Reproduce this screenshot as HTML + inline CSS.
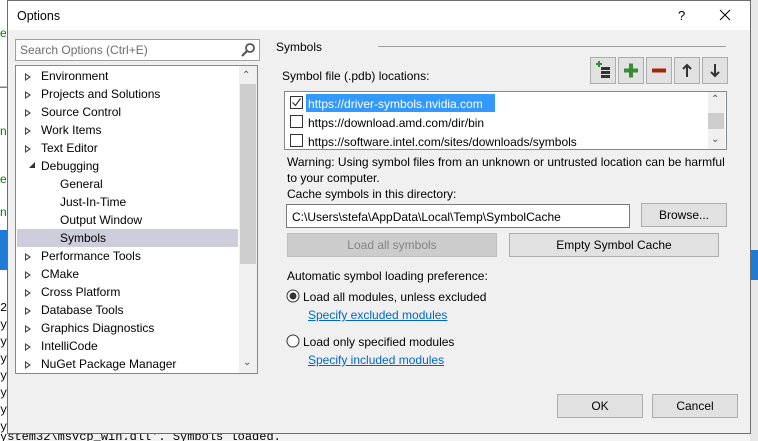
<!DOCTYPE html>
<html style="width:758px;height:441px;overflow:hidden"><head><style>
*{box-sizing:border-box;margin:0;padding:0}
body{width:758px;height:441px;overflow:hidden;background:#f3f3f3;font-family:"Liberation Sans",sans-serif;font-size:12px;color:#000;position:relative}
.a{position:absolute;white-space:nowrap}
.btn{position:absolute;background:#e1e1e1;border:1px solid #adadad;text-align:center}
.tb{position:absolute;top:57px;width:26px;height:27px;background:#e1e1e1;border:1px solid #adadad}
.tri{position:absolute;left:25px;width:0;height:0;border-left:6px solid #444;border-top:4px solid transparent;border-bottom:4px solid transparent}
.tri:after{content:"";position:absolute;left:-5px;top:-2px;border-left:3px solid #fff;border-top:2px solid transparent;border-bottom:2px solid transparent}
.cb{position:absolute;left:290px;width:13px;height:13px;border:1px solid #333;background:#fff}
a{color:#0066cc;text-decoration:underline}
</style></head><body>
<div class="a" style="left:0;top:0;width:7px;height:441px;background:#fff"></div>
<div class="a" style="left:0;top:26px;color:#008000">er</div>
<div class="a" style="left:0;top:74px">_a</div>
<div class="a" style="left:0;top:124px;color:#008000">ng</div>
<div class="a" style="left:0;top:172px;color:#008000">e.</div>
<div class="a" style="left:0;top:205px;color:#008000">n</div>
<div class="a" style="left:0;top:230px;width:7px;height:40px;background:#1e7bd6"></div>
<div class="a" style="left:0;top:300px;width:7px;height:134px;overflow:hidden;font-family:'Liberation Mono';line-height:17px;white-space:normal">2<br>y<br>y<br>y<br>y<br>y<br>y<br>y</div>
<div class="a" style="left:0;top:434px;width:758px;height:7px;overflow:hidden"><div style="font-family:'Liberation Mono';font-size:12px;margin-top:-4px">ystem32\msvcp_win.dll'. Symbols loaded.</div></div>
<div class="a" style="left:750px;top:0;width:8px;height:441px;background:#e8e8e8"></div>
<div class="a" style="left:750px;top:250px;width:8px;height:30px;background:#1e7bd6"></div>
<div class="a" style="left:7px;top:0;width:744px;height:434px;border:1px solid #6e6e6e;background:#f0f0f0"></div>
<div class="a" style="left:8px;top:1px;width:742px;height:29px;background:#fff"></div>
<div class="a" style="left:17px;top:9px;font-size:12.5px">Options</div>
<div class="a" style="left:678px;top:8px;font-size:13px">?</div>
<svg class="a" style="left:719px;top:9px" width="12" height="12"><path d="M1 1l10 10M11 1L1 11" stroke="#000" stroke-width="1"/></svg>
<div class="a" style="left:15px;top:39px;width:245px;height:22px;background:#fff;border:1px solid #a0a0a0"></div>
<div class="a" style="left:20px;top:43px;color:#6d6d6d">Search Options (Ctrl+E)</div>
<svg class="a" style="left:240px;top:42px" width="16" height="16"><circle cx="10" cy="6" r="4" fill="none" stroke="#555" stroke-width="1.8"/><line x1="7" y1="9" x2="2" y2="14" stroke="#555" stroke-width="2.2"/></svg>
<div class="a" style="left:15px;top:65px;width:243px;height:309px;background:#fff;border:1px solid #828790"></div>
<div class="a" style="left:239px;top:66px;width:18px;height:307px;background:#f0f0f0"></div>
<div class="a" style="left:240px;top:84px;width:16px;height:180px;background:#cdcdcd"></div>
<div class="a" style="left:242px;top:70px;color:#555;font-size:10px">⌃</div>
<div class="a" style="left:243px;top:357px;color:#555;font-size:10px">⌄</div>
<div class="a" style="left:17px;top:229px;width:221px;height:18px;background:#cccedb"></div>
<div class="tri" style="top:73px"></div><div class="a" style="left:41px;top:69px">Environment</div>
<div class="tri" style="top:91px"></div><div class="a" style="left:41px;top:87px">Projects and Solutions</div>
<div class="tri" style="top:109px"></div><div class="a" style="left:41px;top:105px">Source Control</div>
<div class="tri" style="top:127px"></div><div class="a" style="left:41px;top:123px">Work Items</div>
<div class="tri" style="top:145px"></div><div class="a" style="left:41px;top:141px">Text Editor</div>
<div class="a" style="left:29px;top:162px;width:0;height:0;border-right:6px solid #333;border-top:6px solid transparent"></div><div class="a" style="left:41px;top:159px">Debugging</div>
<div class="a" style="left:60px;top:177px">General</div>
<div class="a" style="left:60px;top:195px">Just-In-Time</div>
<div class="a" style="left:60px;top:213px">Output Window</div>
<div class="a" style="left:60px;top:231px">Symbols</div>
<div class="tri" style="top:253px"></div><div class="a" style="left:41px;top:249px">Performance Tools</div>
<div class="tri" style="top:271px"></div><div class="a" style="left:41px;top:267px">CMake</div>
<div class="tri" style="top:289px"></div><div class="a" style="left:41px;top:285px">Cross Platform</div>
<div class="tri" style="top:307px"></div><div class="a" style="left:41px;top:303px">Database Tools</div>
<div class="tri" style="top:325px"></div><div class="a" style="left:41px;top:321px">Graphics Diagnostics</div>
<div class="tri" style="top:343px"></div><div class="a" style="left:41px;top:339px">IntelliCode</div>
<div class="tri" style="top:361px"></div><div class="a" style="left:41px;top:357px">NuGet Package Manager</div>
<div class="a" style="left:276px;top:40px">Symbols</div>
<div class="a" style="left:378px;top:46px;width:348px;height:1px;background:#a0a0a0"></div>
<div class="a" style="left:282px;top:69px">Symbol file (.pdb) locations:</div>
<div class="tb" style="left:590px"><svg width="24" height="25"><path d="M5 6h6M8 3v6" stroke="#2e8b2e" stroke-width="2"/><rect x="10" y="9" width="9" height="3" fill="#333"/><rect x="10" y="13" width="9" height="3" fill="#333"/><rect x="10" y="17" width="9" height="3" fill="#333"/></svg></div>
<div class="tb" style="left:618px"><svg width="24" height="25"><path d="M5 12.5h14M12 5.5v14" stroke="#388a34" stroke-width="4"/></svg></div>
<div class="tb" style="left:646px"><svg width="24" height="25"><path d="M5 12.5h14" stroke="#a1260d" stroke-width="4"/></svg></div>
<div class="tb" style="left:674px"><svg width="24" height="25"><path d="M12 19V7M8 11l4-4 4 4" stroke="#333" stroke-width="2" fill="none"/></svg></div>
<div class="tb" style="left:702px"><svg width="24" height="25"><path d="M12 6v12M8 14l4 4 4-4" stroke="#333" stroke-width="2" fill="none"/></svg></div>
<div class="a" style="left:284px;top:91px;width:443px;height:59px;background:#fff;border:1px solid #828790"></div>
<div class="a" style="left:708px;top:92px;width:17px;height:57px;background:#f0f0f0"></div>
<div class="a" style="left:708px;top:113px;width:16px;height:16px;background:#cdcdcd"></div>
<div class="a" style="left:711px;top:94px;color:#555;font-size:10px">⌃</div>
<div class="a" style="left:711px;top:134px;color:#555;font-size:10px">⌄</div>
<div class="a" style="left:306px;top:94px;width:189px;height:18px;background:#3399ff"></div>
<div class="cb" style="top:96px"><svg width="11" height="11" style="position:absolute;left:0;top:0"><path d="M1.5 5.5l3 3 5-7" stroke="#333" fill="none" stroke-width="1.2"/></svg></div>
<div class="a" style="left:308px;top:97px;color:#fff">https://driver-symbols.nvidia.com</div>
<div class="cb" style="top:115px"></div><div class="a" style="left:308px;top:116px">https://download.amd.com/dir/bin</div>
<div class="cb" style="top:134px"></div><div class="a" style="left:308px;top:135px">https://software.intel.com/sites/downloads/symbols</div>
<div class="a" style="left:287px;top:155px">Warning: Using symbol files from an unknown or untrusted location can be harmful</div>
<div class="a" style="left:287px;top:171px">to your computer.</div>
<div class="a" style="left:287px;top:187px">Cache symbols in this directory:</div>
<div class="a" style="left:286px;top:204px;width:344px;height:24px;background:#fff;border:1px solid #7a7a7a"></div>
<div class="a" style="left:292px;top:210px">C:\Users\stefa\AppData\Local\Temp\SymbolCache</div>
<div class="btn" style="left:641px;top:203px;width:86px;height:24px;line-height:23px">Browse...</div>
<div class="btn" style="left:287px;top:233px;width:210px;height:24px;line-height:23px;background:#cccccc;border-color:#bfbfbf;color:#838383">Load all symbols</div>
<div class="btn" style="left:509px;top:233px;width:210px;height:24px;line-height:23px">Empty Symbol Cache</div>
<div class="a" style="left:287px;top:269px">Automatic symbol loading preference:</div>
<svg class="a" style="left:286px;top:289px" width="14" height="14"><circle cx="7" cy="7" r="6" fill="#fff" stroke="#333"/><circle cx="7" cy="7" r="3.5" fill="#333"/></svg>
<div class="a" style="left:303px;top:290px">Load all modules, unless excluded</div>
<a class="a" style="left:308px;top:308px">Specify excluded modules</a>
<svg class="a" style="left:286px;top:334px" width="14" height="14"><circle cx="7" cy="7" r="6" fill="#fff" stroke="#333"/></svg>
<div class="a" style="left:303px;top:335px">Load only specified modules</div>
<a class="a" style="left:308px;top:353px">Specify included modules</a>
<div class="btn" style="left:557px;top:394px;width:86px;height:24px;line-height:23px">OK</div>
<div class="btn" style="left:652px;top:394px;width:86px;height:24px;line-height:23px">Cancel</div>
</body></html>
